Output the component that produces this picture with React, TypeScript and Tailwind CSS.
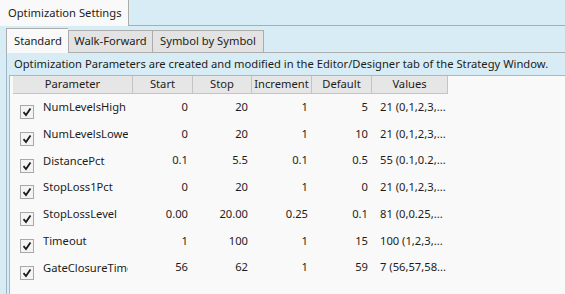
import React from 'react';

const rows: string[][] = [
  ['NumLevelsHigh', '0', '20', '1', '5', '21 (0,1,2,3,...'],
  ['NumLevelsLower', '0', '20', '1', '10', '21 (0,1,2,3,...'],
  ['DistancePct', '0.1', '5.5', '0.1', '0.5', '55 (0.1,0.2,...'],
  ['StopLoss1Pct', '0', '20', '1', '0', '21 (0,1,2,3,...'],
  ['StopLossLevel', '0.00', '20.00', '0.25', '0.1', '81 (0,0.25,...'],
  ['Timeout', '1', '100', '1', '15', '100 (1,2,3,...'],
  ['GateClosureTime', '56', '62', '1', '59', '7 (56,57,58...'],
];

const cols = [
  { label: 'Parameter', w: 'w-[120px]' },
  { label: 'Start', w: 'w-[60px]' },
  { label: 'Stop', w: 'w-[59px]' },
  { label: 'Increment', w: 'w-[60px]' },
  { label: 'Default', w: 'w-[60px]' },
  { label: 'Values', w: 'w-[76px]' },
];

const Check = () => (
  <div className="w-[14px] h-[14px] border border-[#a8a8a8] bg-[#f4f4f4] flex items-center justify-center mt-[6px]">
    <svg width="10" height="10" viewBox="0 0 10 10">
      <path d="M1.5 5.2 L4 8 L8.5 1.5" fill="none" stroke="#1a1a1a" strokeWidth="1.8" />
    </svg>
  </div>
);

export default function App() {
  return (
    <div
      className="w-[565px] h-[294px] overflow-hidden bg-[#d8ecf5] text-[#1c1c1c] text-[11.2px]"
      style={{ fontFamily: '"Noto Sans", "Open Sans", sans-serif' }}
    >
      {/* outer tab strip */}
      <div className="flex h-[26px]">
        <div className="w-[129px] h-[26px] bg-[#f9f9f9] border-r border-[#acacac] pl-[8px] flex items-center">
          Optimization Settings
        </div>
        <div className="flex-1 border-b border-[#acacac]" />
      </div>

      <div className="pl-[6px] pt-[2px]">
        {/* inner tab strip */}
        <div className="flex h-[25px] items-end">
          <div className="w-[62px] h-[25px] bg-[#f9f9f9] border-l border-t border-[#acacac] pl-[7px] flex items-center">
            Standard
          </div>
          <div className="w-[85px] h-[23px] bg-[#e3e3e3] border border-[#acacac] flex items-center justify-center">
            Walk-Forward
          </div>
          <div className="w-[111px] h-[23px] bg-[#e3e3e3] border border-l-0 border-[#acacac] flex items-center justify-center">
            Symbol by Symbol
          </div>
          <div className="flex-1 border-b border-[#acacac]" />
        </div>

        <div className="border-l border-[#9fb8c6] h-[300px] pl-[2px]">
          <div className="h-[22px] pl-[5px] flex items-center whitespace-nowrap">
            Optimization Parameters are created and modified in the Editor/Designer tab of the Strategy Window.
          </div>
          <div className="bg-[#f9f9f9] border-t border-l border-[#b4b4b4] h-[220px] pl-[3px]">
            <div className="flex h-[18px] bg-[#f9f9f9]">
              {cols.map((c) => (
                <div
                  key={c.label}
                  className={`${c.w} shrink-0 h-[18px] bg-[#e6e6e6] border-r border-b border-[#c4c4c4] flex items-center justify-center`}
                >
                  {c.label}
                </div>
              ))}
            </div>
            {rows.map((r) => (
              <div key={r[0]} className="flex h-[26.75px] items-center">
                <div className="w-[120px] shrink-0 flex items-start h-full pt-[5px]">
                  <div className="pl-[7px] pr-[9px]">
                    <Check />
                  </div>
                  <div className="overflow-hidden whitespace-nowrap w-[85px]">{r[0]}</div>
                </div>
                <div className="w-[60px] shrink-0 text-right pr-[5px]">{r[1]}</div>
                <div className="w-[59px] shrink-0 text-right pr-[4px]">{r[2]}</div>
                <div className="w-[60px] shrink-0 text-right pr-[4px]">{r[3]}</div>
                <div className="w-[60px] shrink-0 text-right pr-[4px]">{r[4]}</div>
                <div className="w-[76px] shrink-0 pl-[8px] whitespace-nowrap">{r[5]}</div>
              </div>
            ))}
          </div>
        </div>
      </div>
    </div>
  );
}
